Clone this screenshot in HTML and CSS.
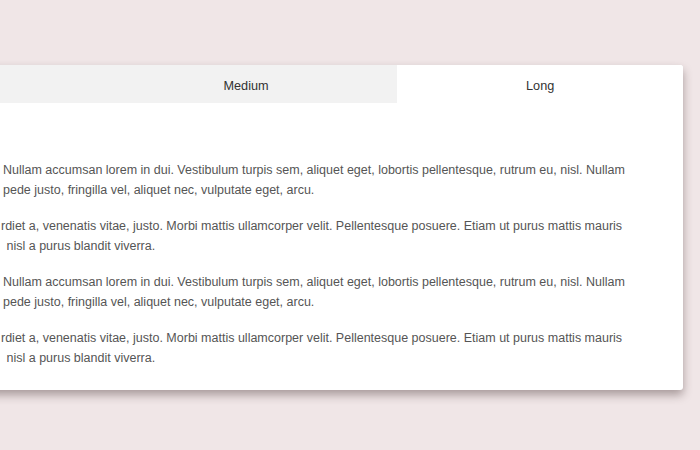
FILE: index.html
```html
<!DOCTYPE html>
<html lang="en">
<head>
<meta charset="utf-8">
<title>Tabs</title>
<link rel="stylesheet" href="styles.css">
</head>
<body>
<div class="card">
  <div class="tabs">
    <div class="tab">Short</div>
    <div class="tab">Medium</div>
    <div class="tab active">Long</div>
  </div>
  <div class="panel">
    <p>Nullam accumsan lorem in dui. Vestibulum turpis sem, aliquet eget, lobortis pellentesque, rutrum eu, nisl. Nullam<br>pede justo, fringilla vel, aliquet nec, vulputate eget, arcu.</p>
    <p class="shift">rdiet a, venenatis vitae, justo. Morbi mattis ullamcorper velit. Pellentesque posuere. Etiam ut purus mattis mauris<br>&nbsp;nisl a purus blandit viverra.</p>
    <p>Nullam accumsan lorem in dui. Vestibulum turpis sem, aliquet eget, lobortis pellentesque, rutrum eu, nisl. Nullam<br>pede justo, fringilla vel, aliquet nec, vulputate eget, arcu.</p>
    <p class="shift">rdiet a, venenatis vitae, justo. Morbi mattis ullamcorper velit. Pellentesque posuere. Etiam ut purus mattis mauris<br>&nbsp;nisl a purus blandit viverra.</p>
  </div>
</div>
</body>
</html>
```

FILE: styles.css
```css
html, body {
  margin: 0;
  padding: 0;
}
body {
  background: #f0e6e7;
  font-family: "Liberation Sans", Arial, sans-serif;
  overflow: hidden;
  height: 450px;
}
.card {
  margin-top: 65px;
  margin-left: -193px;
  width: 876px;
  background: #ffffff;
  border-radius: 3px;
  box-shadow: 0 5px 10px rgba(60, 40, 40, 0.4);
  overflow: hidden;
}
.tabs {
  display: flex;
  height: 38px;
}
.tab {
  flex: 1 1 auto;
  display: flex;
  align-items: center;
  justify-content: center;
  padding-top: 3px;
  box-sizing: border-box;
  background: #f2f2f2;
  color: #333333;
  font-size: 12.7px;
}
.tab.active {
  background: #ffffff;
}
.panel {
  padding: 57px 0 22px 196px;
  color: #555555;
  font-size: 12.5px;
  line-height: 20px;
  white-space: nowrap;
}
.panel p {
  margin: 0 0 16px;
}
.panel p:last-child {
  margin-bottom: 0;
}
.panel p.shift {
  text-indent: -2px;
}
```
